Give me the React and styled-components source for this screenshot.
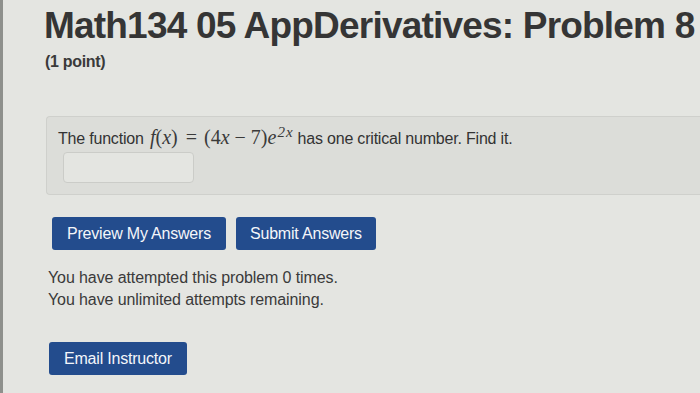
import React from "react";
import styled, { createGlobalStyle } from "styled-components";

const Global = createGlobalStyle`
  html, body {
    margin: 0;
    padding: 0;
    background: #e4e5e1;
  }
  body {
    font-family: "Liberation Sans", Arial, sans-serif;
    color: #363636;
    overflow: hidden;
  }
`;

const Page = styled.div`
  width: 700px;
  height: 393px;
  box-sizing: border-box;
  padding: 5px 0 0 41px;
  border-left: 3px solid #8e908c;
  overflow: hidden;
`;

const Title = styled.h1`
  margin: 0;
  font-size: 37px;
  line-height: 42px;
  font-weight: bold;
  letter-spacing: -0.8px;
  color: #353535;
  white-space: nowrap;
`;

const Points = styled.div`
  margin: 5px 0 0 1px;
  font-size: 16px;
  line-height: 20px;
  font-weight: bold;
  letter-spacing: -0.3px;
  color: #3a3a3a;
`;

const ProblemBox = styled.div`
  margin: 44px 0 0 2px;
  width: 660px;
  box-sizing: border-box;
  padding: 12px 12px 11px 11px;
  background: #dcddd9;
  border: 1px solid #cfd0cc;
  border-right: none;
  border-radius: 4px 0 0 4px;
`;

const Prompt = styled.div`
  font-size: 16px;
  line-height: 20px;
  height: 20px;
  letter-spacing: -0.2px;
  color: #333;
  white-space: nowrap;
`;

const M = styled.span`
  font-family: "Liberation Serif", "Times New Roman", serif;
  font-size: 20px;
  line-height: 10px;
  font-style: ${(p) => (p.$italic ? "italic" : "normal")};
  letter-spacing: 0;
  padding: ${(p) => p.$pad || "0"};
  color: #3a3a3a;
`;

const Sup = styled.sup`
  font-family: "Liberation Serif", "Times New Roman", serif;
  font-size: 15px;
  font-style: italic;
  vertical-align: 7px;
  line-height: 0;
  letter-spacing: 1px;
  padding: 0 4px 0 1px;
  color: #3a3a3a;
`;

const AnswerInput = styled.input`
  display: block;
  margin: 3px 0 0 5px;
  width: 131px;
  height: 31px;
  box-sizing: border-box;
  border: 1px solid #cbccc8;
  border-radius: 4px;
  background: #e4e5e1;
`;

const ButtonRow = styled.div`
  display: flex;
  gap: 10px;
  margin: 22px 0 0 8px;
`;

const Button = styled.button`
  height: 33px;
  padding: 0 ${(p) => p.$pad || "14px"};
  border: none;
  border-radius: 3px;
  background: #234c8d;
  color: #f4f6fa;
  font-family: "Liberation Sans", Arial, sans-serif;
  font-size: 16px;
  letter-spacing: -0.2px;
  cursor: pointer;
`;

const Info = styled.div`
  margin: 17px 0 0 4px;
  font-size: 16px;
  line-height: 22px;
  color: #3a3a3a;
  letter-spacing: -0.1px;
`;

const EmailRow = styled.div`
  margin: 31px 0 0 5px;
`;

export default function App() {
  return (
    <>
      <Global />
      <Page>
        <Title>Math134 05 AppDerivatives: Problem 8</Title>
        <Points>(1 point)</Points>
        <ProblemBox>
          <Prompt>
            The function{" "}
            <M $italic $pad="0 0 0 2px">f</M>
            <M>(</M>
            <M $italic>x</M>
            <M $pad="0 8px 0 0">)</M>
            <M $pad="0 7px 0 0">=</M>
            <M>(4</M>
            <M $italic>x</M>
            <M $pad="0 5px">−</M>
            <M>7)</M>
            <M $italic>e</M>
            <Sup>2x</Sup>has one critical number. Find it.
          </Prompt>
          <AnswerInput type="text" aria-label="answer" />
        </ProblemBox>
        <ButtonRow>
          <Button $pad="15px">Preview My Answers</Button>
          <Button $pad="14px">Submit Answers</Button>
        </ButtonRow>
        <Info>
          You have attempted this problem 0 times.
          <br />
          You have unlimited attempts remaining.
        </Info>
        <EmailRow>
          <Button $pad="15px">Email Instructor</Button>
        </EmailRow>
      </Page>
    </>
  );
}
